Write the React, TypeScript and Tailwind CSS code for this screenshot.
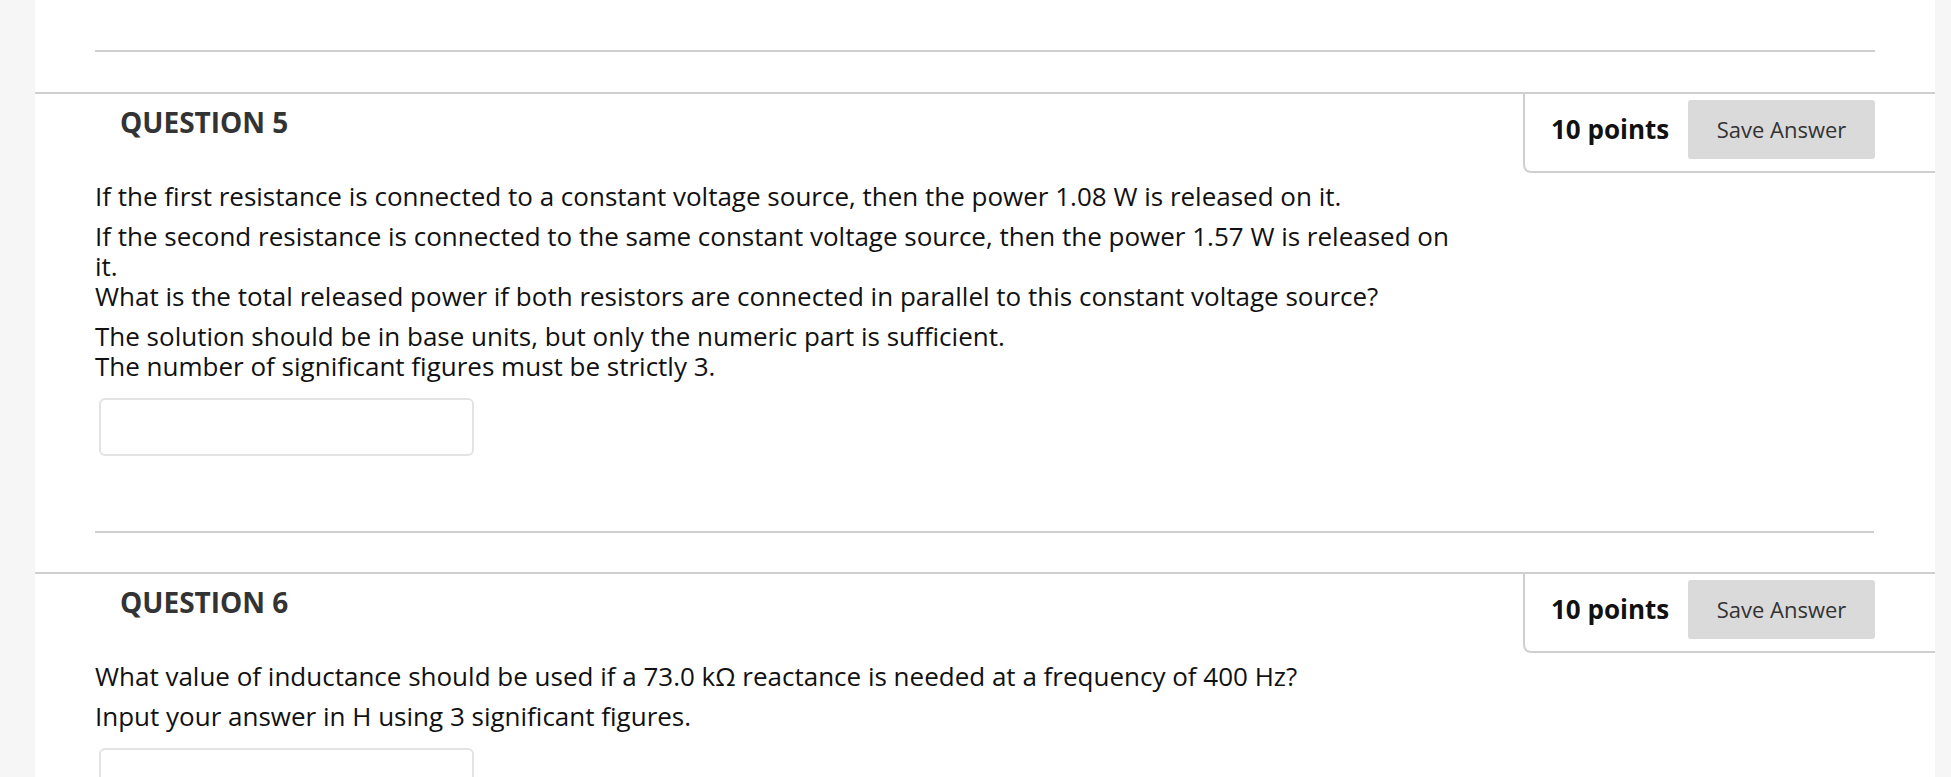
import React from "react";

const font = { fontFamily: '"Open Sans", "Noto Sans", sans-serif' };

function Question({ n, children }: { n: number; children: React.ReactNode }) {
  return (
    <div className="border-t-2 border-[#cfcfcf]">
      <div className="flex items-start justify-between">
        <h2 className="pl-[85px] pt-[8px] text-[28px] leading-[40px] font-bold text-[#333333]">
          QUESTION {n}
        </h2>
        <div className="flex w-[412px] shrink-0 items-center justify-between rounded-bl-[8px] border-b-2 border-l-2 border-[#cfcfcf] pb-[12px] pl-[26px] pr-[60px] pt-[6px]">
          <span className="shrink-0 whitespace-nowrap text-[26px] font-bold text-[#111111]">10 points</span>
          <button className="h-[59px] w-[187px] shrink-0 whitespace-nowrap rounded-[3px] bg-[#dadada] text-[22px] text-[#333333]">
            Save Answer
          </button>
        </div>
      </div>
      <div className="pl-[60px] pt-[8px] text-[26px] leading-[30px] text-[#111111]">{children}</div>
    </div>
  );
}

function AnswerBox() {
  return (
    <div className="ml-[4px] mt-[17px] h-[58px] w-[375px] rounded-[6px] border-2 border-[#e3e3e3] bg-white" />
  );
}

export default function App() {
  return (
    <div className="flex min-h-screen bg-[#f6f6f6]" style={font}>
      <div className="ml-[35px] w-[1900px] bg-white">
        <div className="h-[50px]" />
        <div className="mx-[60px] border-t-2 border-[#cfcfcf]" />
        <div className="h-[40px]" />
        <Question n={5}>
          <div className="w-[1368px]">
            <p className="mb-[10px]">
              If the first resistance is connected to a constant voltage source, then the power 1.08 W is released on it.
            </p>
            <p className="mb-[10px]">
              If the second resistance is connected to the same constant voltage source, then the power 1.57 W is released on it.
              <br />
              What is the total released power if both resistors are connected in parallel to this constant voltage source?
            </p>
            <p>
              The solution should be in base units, but only the numeric part is sufficient.
              <br />
              The number of significant figures must be strictly 3.
            </p>
          </div>
          <AnswerBox />
          <div className="h-[75px]" />
          <div className="mr-[61px] border-t-2 border-[#cfcfcf]" />
          <div className="h-[39px]" />
        </Question>
        <Question n={6}>
          <div className="w-[1368px]">
            <p className="mb-[10px]">
              What value of inductance should be used if a 73.0 kΩ reactance is needed at a frequency of 400 Hz?
            </p>
            <p>Input your answer in H using 3 significant figures.</p>
          </div>
          <AnswerBox />
          <div className="h-[75px]" />
        </Question>
      </div>
    </div>
  );
}
